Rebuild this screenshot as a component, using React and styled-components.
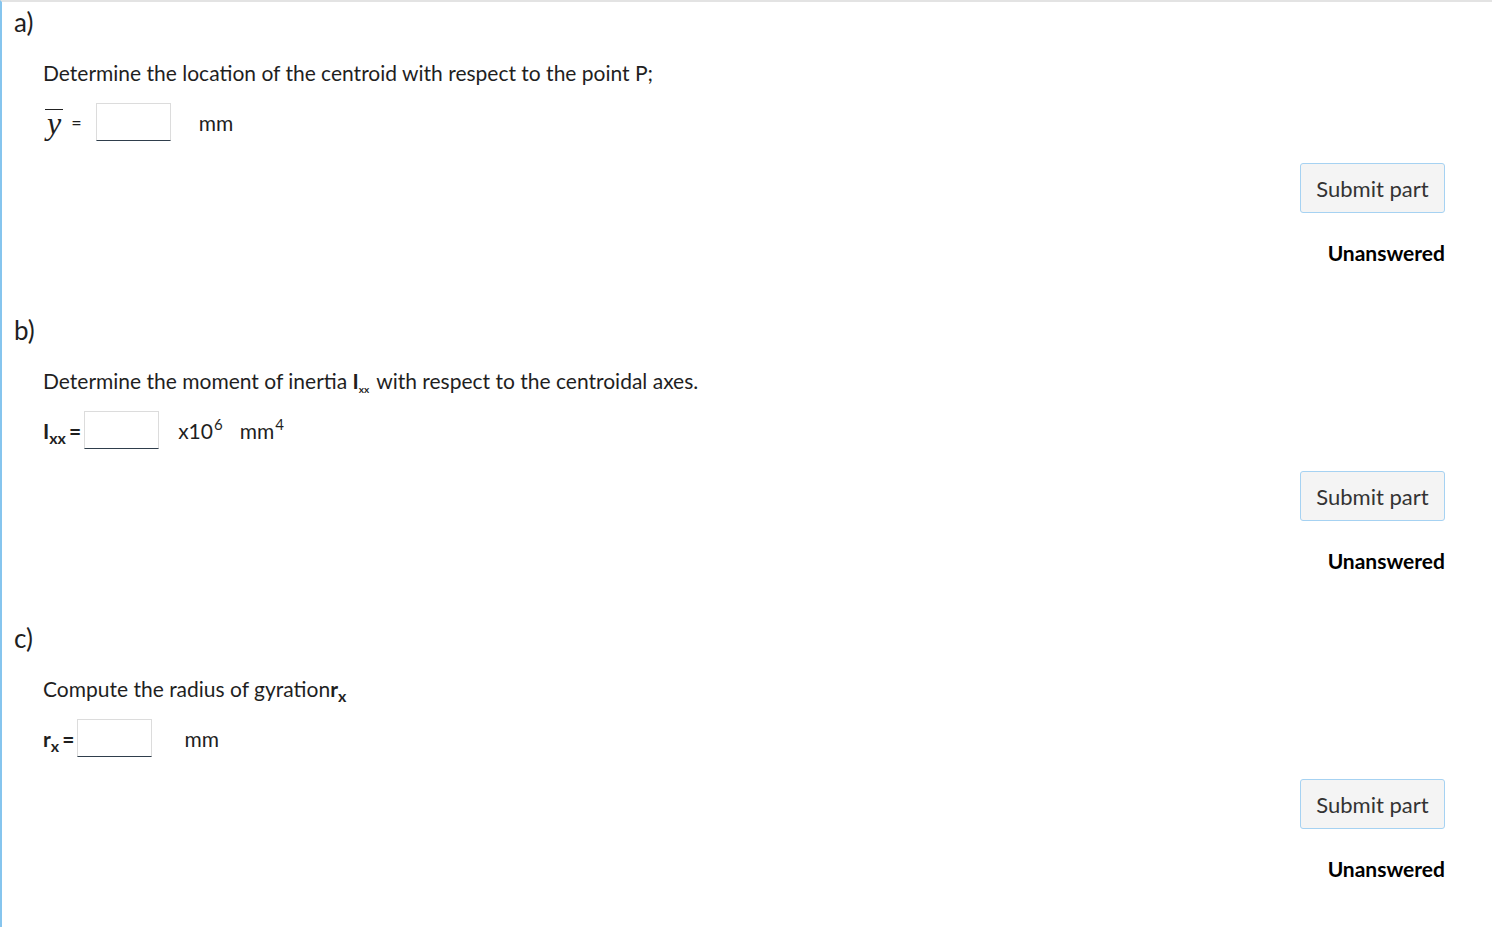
import styled, { createGlobalStyle } from "styled-components";

const GlobalStyle = createGlobalStyle`
    html, body {
        margin: 0;
        padding: 0;
        background: #fff;
    }
    body {
        font-family: Lato, "Open Sans", sans-serif;
        color: #1f1f1f;
    }
`

function AnswerBox(){
    return <Input type="text" aria-label="answer" />
}

function Part({label, question, row, first}){
    return (
        <Section first={first}>
            <Label>{label}</Label>
            <Body>
                <Question>{question}</Question>
                <InputRow>{row}</InputRow>
            </Body>
            <Actions>
                <SubmitButton>Submit part</SubmitButton>
                <Status>Unanswered</Status>
            </Actions>
        </Section>
    )
}

function App(){
    return (
        <>
            <GlobalStyle />
            <Page>
                <Part
                    first
                    label="a)"
                    question="Determine the location of the centroid with respect to the point P;"
                    row={
                        <>
                            <YBar>y</YBar>
                            <Equals>=</Equals>
                            <AnswerBox />
                            <Unit gap={28}>mm</Unit>
                        </>
                    }
                />
                <Part
                    label="b)"
                    question={
                        <>
                            Determine the moment of inertia <b>I</b><TinySub>xx</TinySub> with respect to the centroidal axes.
                        </>
                    }
                    row={
                        <>
                            <Symbol>I<Sub>xx</Sub></Symbol>
                            <Equals bold>=</Equals>
                            <AnswerBox />
                            <Unit gap={19}>x10<Sup>6</Sup></Unit>
                            <Unit gap={17}>mm<Sup>4</Sup></Unit>
                        </>
                    }
                />
                <Part
                    label="c)"
                    question={
                        <>
                            Compute the radius of gyration<Symbol>r<Sub>x</Sub></Symbol>
                        </>
                    }
                    row={
                        <>
                            <Symbol>r<Sub>x</Sub></Symbol>
                            <Equals bold>=</Equals>
                            <AnswerBox />
                            <Unit gap={32}>mm</Unit>
                        </>
                    }
                />
            </Page>
        </>
    )
}

export default App

const Page=styled.div`
    border-top:2px solid #e3e3e3;
    border-left:2px solid #86c5ee;
    padding:5px 47px 30px 12px;
    box-sizing:border-box;
    height:927px;
`

const Section=styled.div`
    display:flex;
    flex-direction:column;
    margin-top:${p=>p.first ? '0' : '48px'};
`

const Label=styled.div`
    font-size:26px;
    line-height:30px;
    height:30px;
`

const Body=styled.div`
    padding-left:29px;
`

const Question=styled.div`
    margin-top:22px;
    font-size:21px;
    line-height:28px;
    height:28px;
    white-space:nowrap;
`

const InputRow=styled.div`
    margin-top:16px;
    display:flex;
    align-items:center;
    height:38px;
    font-size:21px;
`

const Input=styled.input`
    box-sizing:border-box;
    width:75px;
    height:38px;
    border:1px solid #dcdcdc;
    border-bottom:1px solid #2f3e4c;
    background:#fff;
    padding:0 6px;
    margin:0;
    font:inherit;
    outline:none;
`

const YBar=styled.span`
    font-family:"Liberation Serif", serif;
    font-style:italic;
    font-size:32px;
    line-height:26px;
    border-top:1.5px solid #222;
    padding:0 2px;
    margin-left:2px;
`

const Equals=styled.span`
    margin:0 ${p=>p.bold ? '3px' : '14px'} 0 ${p=>p.bold ? '3px' : '8px'};
    font-size:${p=>p.bold ? '21px' : '18px'};
    font-weight:${p=>p.bold ? 700 : 400};
`

const Symbol=styled.span`
    font-weight:700;
`

const Sub=styled.sub`
    font-size:16px;
    vertical-align:-5px;
    line-height:0;
`

const TinySub=styled.sub`
    font-size:10px;
    font-weight:700;
    vertical-align:-4px;
    line-height:0;
    margin-right:2px;
`

const Sup=styled.sup`
    font-size:15px;
    vertical-align:9px;
    line-height:0;
    margin-left:1px;
`

const Unit=styled.span`
    margin-left:${p=>p.gap}px;
`

const Actions=styled.div`
    display:flex;
    flex-direction:column;
    align-items:flex-end;
`

const SubmitButton=styled.button`
    margin-top:22px;
    box-sizing:border-box;
    width:145px;
    height:50px;
    background:#f4f4f4;
    border:1px solid #a6d2f2;
    border-radius:3px;
    font-family:Lato, "Open Sans", sans-serif;
    font-size:22px;
    color:#333;
    cursor:pointer;
`

const Status=styled.div`
    margin-top:26px;
    font-size:21px;
    line-height:28px;
    font-weight:700;
    color:#000;
`
